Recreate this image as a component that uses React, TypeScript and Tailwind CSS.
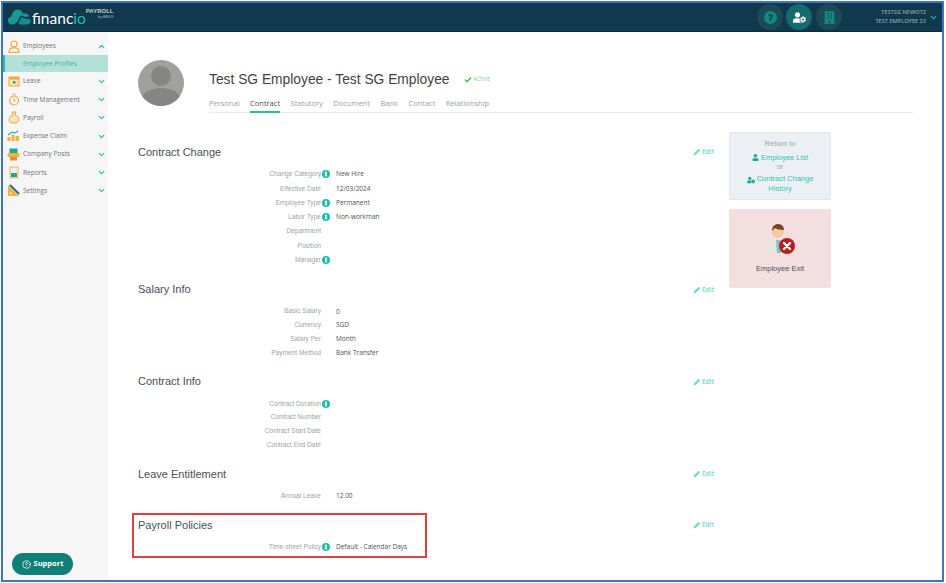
import { Check, ChevronDown, ChevronUp, CircleHelp } from "lucide-react"
import { FaBuilding, FaQuestion, FaUser, FaUserClock, FaUserCog } from "react-icons/fa"

const sans = "font-['Liberation_Sans',Arial,sans-serif]"

function Logo() {
  return (
    <svg width="23" height="16" viewBox="0 0 23 16" className="shrink-0">
      <path d="M3.500 15.500C1.200 15.500 0 13.500 0 11.500c0-2.200 1.500-3.800 3.500-4C4 3.500 6.500 0.500 9.500 0.500c2.500 0 4.500 1.600 5.200 4 2.500-.6 5.300.5 6.300 2.500-1.800 1.500-4 1-5.500.2-1.800-.9-3.700 0-4.500 2-1 3.300-3.500 6.300-7.500 6.300z" fill="#159a94" />
      <path d="M13 15.500c-1.500 0-2.400-.8-2.700-1.800 1.300-1.500 2-3 2.500-4.300 1-1 2.300-1 3.500-.3 1.500 1 3.300 1.300 5 .5.800 1 1.200 2 1.200 3 0 1.600-1.300 2.900-3 2.900z" fill="#1c8a8e" />
    </svg>
  )
}

function InfoDot() {
  return (
    <svg width="8" height="8" viewBox="0 0 8 8" className="shrink-0">
      <circle cx="4" cy="4" r="4" fill="#1fbfa8" />
      <rect x="3.200" y="1.400" width="1.600" height="5.200" rx="0.600" fill="#fff" />
    </svg>
  )
}

function EditIcon() {
  return (
    <svg width="8" height="8" viewBox="0 0 8 8">
      <path d="M0.500 7.500 1 5.400 5.600 0.800 7.200 2.400 2.600 7z" fill="#6fdccb" />
    </svg>
  )
}

// little coloured menu icons
function MenuIcon({ name }: { name: string }) {
  if (name === "Employees")
    return (
      <svg width="12" height="13" viewBox="0 0 12 13" fill="none" stroke="#f2a93b" strokeWidth="1.200">
        <circle cx="6" cy="4" r="3" />
        <path d="M1 12.400c0-3 2-4.400 3.200-4.600h3.600c1.200.2 3.200 1.600 3.200 4.600z" />
      </svg>
    )
  if (name === "Leave")
    return (
      <svg width="12" height="12" viewBox="0 0 12 12">
        <rect x="1" y="2" width="10" height="9" fill="#fbe3b0" stroke="#f0a73a" />
        <rect x="1" y="2" width="10" height="2.500" fill="#f0a73a" />
        <rect x="5" y="6" width="2.500" height="2.500" fill="#1aa79a" />
      </svg>
    )
  if (name === "Time Management")
    return (
      <svg width="12" height="13" viewBox="0 0 12 13" fill="none" stroke="#f0a73a" strokeWidth="1.100">
        <circle cx="6" cy="7.500" r="4.500" />
        <path d="M4.500 1h3M6 5v2.500l1.500 1" />
      </svg>
    )
  if (name === "Payroll")
    return (
      <svg width="12" height="13" viewBox="0 0 12 13">
        <path d="M4 1h4L7 4c3 1 4 3 4 5 0 2-2 3-5 3s-5-1-5-3c0-2 1-4 4-5z" fill="#fbe6bd" stroke="#ec9c3a" strokeWidth="0.900" />
      </svg>
    )
  if (name === "Expense Claim")
    return (
      <svg width="13" height="12" viewBox="0 0 13 12">
        <rect x="0.500" y="7" width="3" height="4" fill="#f2b23e" />
        <rect x="4.500" y="4.500" width="3" height="6.500" fill="#f2b23e" />
        <rect x="8.500" y="6" width="3.500" height="5" fill="#f2b23e" />
        <path d="M1 5 5 2l3 1 3-2" fill="none" stroke="#1aa79a" strokeWidth="1.100" />
      </svg>
    )
  if (name === "Company Posts")
    return (
      <svg width="13" height="13" viewBox="0 0 13 13">
        <rect x="2.500" y="0.500" width="8" height="5" fill="#1aa79a" />
        <rect x="0.500" y="5" width="12" height="4" rx="1" fill="#f2b23e" />
        <rect x="3" y="9" width="7" height="3.500" fill="#e58f3a" />
      </svg>
    )
  if (name === "Reports")
    return (
      <svg width="12" height="13" viewBox="0 0 12 13">
        <rect x="2" y="1" width="8" height="11" fill="#f8f1e2" stroke="#e9a64a" strokeWidth="0.800" />
        <rect x="3" y="7" width="6" height="4" fill="#1aa79a" />
      </svg>
    )
  return (
    <svg width="13" height="13" viewBox="0 0 13 13">
      <path d="M1 1v11h11z" fill="#f2b23e" />
      <path d="M3 1l9 9" stroke="#1f6f8f" strokeWidth="2" />
      <path d="M3 8v2h2z" fill="#fff" />
    </svg>
  )
}

const menu = ["Leave", "Time Management", "Payroll", "Expense Claim", "Company Posts", "Reports", "Settings"]

const tabs = ["Personal", "Contract", "Statutory", "Document", "Bank", "Contact", "Relationship"]

type Row = { label: string; info?: boolean; value?: string }

const sections: { title: string; rows: Row[] }[] = [
  {
    title: "Contract Change",
    rows: [
      { label: "Change Category", info: true, value: "New Hire" },
      { label: "Effective Date", value: "12/03/2024" },
      { label: "Employee Type", info: true, value: "Permanent" },
      { label: "Labor Type", info: true, value: "Non-workman" },
      { label: "Department" },
      { label: "Position" },
      { label: "Manager", info: true },
    ],
  },
  {
    title: "Salary Info",
    rows: [
      { label: "Basic Salary", value: "0" },
      { label: "Currency", value: "SGD" },
      { label: "Salary Per", value: "Month" },
      { label: "Payment Method", value: "Bank Transfer" },
    ],
  },
  {
    title: "Contract Info",
    rows: [
      { label: "Contract Duration", info: true },
      { label: "Contract Number" },
      { label: "Contract Start Date" },
      { label: "Contract End Date" },
    ],
  },
  {
    title: "Leave Entitlement",
    rows: [{ label: "Annual Leave", value: "12.00" }],
  },
]

function Section({ title, rows }: { title: string; rows: Row[] }) {
  // the long first block sits a bit looser than the short ones
  const rowHeight = rows.length > 4 ? "h-[14.300px]" : "h-[13.700px]"
  return (
    <div>
      <div className="flex h-[16px] items-center justify-between">
        <h2 className={`${sans} text-[11px] leading-none text-[#4a4f55]`}>{title}</h2>
        <a className="flex items-center gap-[1px] text-[6.500px] font-semibold text-[#6fdccb]">
          <EditIcon />
          Edit
        </a>
      </div>
      <div className="mt-[7px]">
        {rows.map((r) => (
          <div key={r.label} className={`flex items-center ${rowHeight}`}>
            <div className={`${sans} w-[183px] text-right text-[6.600px] text-[#a0a3a6]`}>{r.label}</div>
            <div className="ml-[1px] flex w-[14px] items-center">{r.info && <InfoDot />}</div>
            <div className="text-[6.500px] text-[#4d5257]">{r.value}</div>
          </div>
        ))}
      </div>
    </div>
  )
}

export default function App() {
  return (
    <div className="h-[583px] w-[946px] overflow-hidden bg-white p-[1px] font-['Open_Sans',sans-serif]">
      <div className="flex h-[581px] w-[943px] flex-col border-2 border-[#4472c4]">
        {/* Top bar */}
        <header className="flex h-[29px] shrink-0 items-center justify-between border-b border-[#0b2a3a] bg-[#11394d] pl-[5px] pr-[4px]">
          <div className="flex items-center">
            <Logo />
            <span className="ml-[1px] mt-[3px] font-['Lato',sans-serif] text-[15.500px] leading-none text-white">
              financ<span className="text-[#1fbfa8]">io</span>
            </span>
            <div className={`${sans} -mt-[7px] text-right leading-none`}>
              <div className="text-[6px] font-bold text-[#c5d2d8]">PAYROLL</div>
              <div className="mt-[1px] text-[4px] text-[#9db0b9]">by ABSS</div>
            </div>
          </div>
          <div className="flex items-center">
            <div className="flex h-[26px] w-[26px] items-center justify-center rounded-full bg-[#1c4a56]">
              <span className="flex h-[13px] w-[13px] items-center justify-center rounded-full bg-[#0f8a85]">
                <FaQuestion className="h-[7px] w-[7px] text-[#11394d]" />
              </span>
            </div>
            <div className="ml-[3px] flex h-[26px] w-[26px] items-center justify-center rounded-full bg-[#156a6e]">
              <FaUserCog className="h-[13px] w-[13px] text-white" />
            </div>
            <div className="ml-[4px] flex h-[26px] w-[26px] items-center justify-center rounded-full bg-[#1c4a56]">
              <FaBuilding className="h-[13px] w-[11px] text-[#138a86]" />
            </div>
            <div className="ml-[33px] text-right text-[5.600px] font-semibold leading-[9.500px] text-[#8fa3ad]">
              <div>TESTSG NEWOT2</div>
              <div>TEST EMPLOYEE 23</div>
            </div>
            <ChevronDown className="ml-[3px] h-[9px] w-[9px] text-[#1fbfa8]" strokeWidth={3} />
          </div>
        </header>

        <div className="flex min-h-0 flex-1">
          {/* Sidebar */}
          <aside className="flex w-[105px] shrink-0 flex-col justify-between bg-[#f6f6f6] pb-[5px]">
            <nav className="pt-[5px] text-[6.500px] text-[#6d7378]">
              <div className="flex h-[18px] items-center pl-[3px] pr-[2px]">
                <span className="flex w-[15px] justify-center"><MenuIcon name="Employees" /></span>
                <span className="ml-[2px] flex-1">Employees</span>
                <ChevronUp className="h-[9px] w-[9px] text-[#1fbfa8]" strokeWidth={3} />
              </div>
              <div className="flex h-[17px] items-center border-l-2 border-[#1fbfa8] bg-[#b4e2d8] pl-[18px] text-[#4fae9e]">
                Employee Profiles
              </div>
              {menu.map((m) => (
                <div key={m} className="flex h-[18.300px] items-center pl-[3px] pr-[2px]">
                  <span className="flex w-[15px] justify-center"><MenuIcon name={m} /></span>
                  <span className="ml-[2px] flex-1">{m}</span>
                  <ChevronDown className="h-[9px] w-[9px] text-[#1fbfa8]" strokeWidth={3} />
                </div>
              ))}
            </nav>
            <div className="pl-[9px]">
              <button className="flex h-[22px] w-[61px] items-center justify-center gap-[3px] rounded-full bg-[#0f7f78] text-[7.500px] font-bold text-white">
                <CircleHelp className="h-[9px] w-[9px]" />
                Support
              </button>
            </div>
          </aside>

          {/* Content */}
          <main className="min-w-0 flex-1 pl-[30px] pr-[29px] pt-[28px]">
            <div className="flex items-start">
              <svg width="46" height="46" viewBox="0 0 46 46" className="shrink-0">
                <clipPath id="av"><circle cx="23" cy="23" r="23" /></clipPath>
                <g clipPath="url(#av)">
                  <rect width="46" height="46" fill="#a0a19c" />
                  <circle cx="23" cy="16" r="10" fill="#858683" />
                  <ellipse cx="23" cy="40" rx="20" ry="12" fill="#858683" />
                </g>
              </svg>
              <div className="ml-[25px] flex-1">
                <div className="mt-[11px] flex items-center">
                  <h1 className={`${sans} text-[13.800px] leading-[18px] text-[#3f4347]`}>
                    Test SG Employee - Test SG Employee
                  </h1>
                  <Check className="ml-[14px] h-[8px] w-[8px] text-[#45b649]" strokeWidth={4} />
                  <span className="ml-[2px] text-[5px] text-[#7fc98a]">ACTIVE</span>
                </div>
                <div className="mt-[9px] flex gap-[10.500px] border-b border-[#e6ebf0] text-[7.500px] text-[#9b9fa3]">
                  {tabs.map((t) => (
                    <span
                      key={t}
                      className={
                        t === "Contract"
                          ? "-mb-[1px] flex h-[15px] items-start border-b-2 border-[#1fbfa8] text-[#4a4f55]"
                          : "flex h-[14px] items-start"
                      }
                    >
                      {t}
                    </span>
                  ))}
                </div>
              </div>
            </div>

            <div className="mt-[19px] flex">
              <div className="w-[576px] shrink-0">
                <div className="mt-[12px] flex flex-col gap-[14.500px]">
                  {sections.map((s) => (
                    <Section key={s.title} title={s.title} rows={s.rows} />
                  ))}
                  <div className="relative">
                    <Section
                      title="Payroll Policies"
                      rows={[{ label: "Time-sheet Policy", info: true, value: "Default - Calendar Days" }]}
                    />
                    <div className="absolute -left-[6px] -top-[4px] h-[45px] w-[295px] border-2 border-[#e2403f]" />
                  </div>
                </div>
              </div>

              {/* Side cards */}
              <div className="ml-[15px] flex w-[102px] shrink-0 flex-col gap-[9px]">
                <div className={`${sans} flex h-[68px] flex-col items-center justify-center rounded-[2px] border border-[#e1e7ee] bg-[#ecf0f5] text-center text-[7.500px] leading-[9px] text-[#a0a4a8]`}>
                  <div>Return to</div>
                  <div className="mt-[5px] flex items-center gap-[2px] text-[#2cc4b0]">
                    <FaUser className="h-[7px] w-[7px] text-[#1fa898]" />
                    Employee List
                  </div>
                  <div>or</div>
                  <div className="mt-[3px] text-[#2cc4b0]">
                    <FaUserClock className="mr-[2px] inline h-[8px] w-[8px] text-[#1fa898]" />
                    Contract Change
                    <br />
                    History
                  </div>
                </div>
                <div className={`${sans} flex h-[79px] flex-col items-center rounded-[2px] bg-[#f3dfe0] pt-[14px] text-[7.500px] text-[#4a4f55]`}>
                  <svg width="32" height="32" viewBox="0 0 32 32">
                    <path d="M2 30c0-9 5-12 9-13h6l3 13z" fill="#e5e6e2" />
                    <path d="M12 17h4l1 13h-4z" fill="#79c6d0" />
                    <circle cx="14" cy="9" r="6" fill="#f4c9a5" />
                    <path d="M8 8c0-5 3-7 6-7s6 2 6 6c-3 0-8-1-9-2-1 1-2 2-3 3z" fill="#7a4526" />
                    <circle cx="23" cy="23" r="8" fill="#b81c1c" />
                    <path d="M20 20l6 6M26 20l-6 6" stroke="#fff" strokeWidth="2.400" strokeLinecap="round" />
                  </svg>
                  <div className="mt-[8px]">Employee Exit</div>
                </div>
              </div>
            </div>
          </main>
        </div>
      </div>
    </div>
  )
}
